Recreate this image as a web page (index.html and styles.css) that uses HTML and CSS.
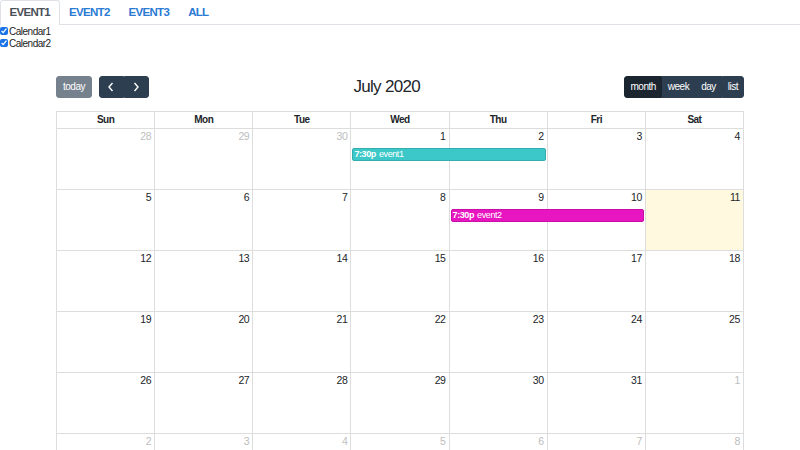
FILE: index.html
```html
<!DOCTYPE html>
<html>
<head>
<meta charset="utf-8">
<link rel="stylesheet" href="styles.css">
</head>
<body>
<div class="tabs">
  <div class="tab active">EVENT1</div>
  <div class="tab">EVENT2</div>
  <div class="tab">EVENT3</div>
  <div class="tab">ALL</div>
</div>
<div class="cals">
  <label class="cal"><input type="checkbox" checked>Calendar1</label>
  <label class="cal"><input type="checkbox" checked>Calendar2</label>
</div>
<div class="calendar">
  <div class="toolbar">
    <div class="tb-left">
      <button class="btn btn-today">today</button>
      <div class="btn-group">
        <button class="btn btn-nav"><svg width="8" height="10" viewBox="0 0 8 10"><polyline points="5.5,1 2,5 5.5,9" fill="none" stroke="#fff" stroke-width="1.4"/></svg></button>
        <button class="btn btn-nav"><svg width="8" height="10" viewBox="0 0 8 10"><polyline points="2.5,1 6,5 2.5,9" fill="none" stroke="#fff" stroke-width="1.4"/></svg></button>
      </div>
    </div>
    <h2 class="title">July 2020</h2>
    <div class="btn-group">
      <button class="btn active">month</button>
      <button class="btn">week</button>
      <button class="btn">day</button>
      <button class="btn">list</button>
    </div>
  </div>
  <div class="grid">
    <div class="head-row">
      <div class="hcell">Sun</div><div class="hcell">Mon</div><div class="hcell">Tue</div><div class="hcell">Wed</div><div class="hcell">Thu</div><div class="hcell">Fri</div><div class="hcell">Sat</div>
    </div>
    <div class="week">
      <div class="day other">28</div><div class="day other">29</div><div class="day other">30</div><div class="day">1</div><div class="day">2</div><div class="day">3</div><div class="day">4</div>
      <div class="event ev1"><b>7:30p</b><span>event1</span></div>
    </div>
    <div class="week">
      <div class="day">5</div><div class="day">6</div><div class="day">7</div><div class="day">8</div><div class="day">9</div><div class="day">10</div><div class="day today">11</div>
      <div class="event ev2"><b>7:30p</b><span>event2</span></div>
    </div>
    <div class="week">
      <div class="day">12</div><div class="day">13</div><div class="day">14</div><div class="day">15</div><div class="day">16</div><div class="day">17</div><div class="day">18</div>
    </div>
    <div class="week">
      <div class="day">19</div><div class="day">20</div><div class="day">21</div><div class="day">22</div><div class="day">23</div><div class="day">24</div><div class="day">25</div>
    </div>
    <div class="week">
      <div class="day">26</div><div class="day">27</div><div class="day">28</div><div class="day">29</div><div class="day">30</div><div class="day">31</div><div class="day other">1</div>
    </div>
    <div class="week">
      <div class="day other">2</div><div class="day other">3</div><div class="day other">4</div><div class="day other">5</div><div class="day other">6</div><div class="day other">7</div><div class="day other">8</div>
    </div>
  </div>
</div>
</body>
</html>
```
FILE: styles.css
```css
html, body {
  margin: 0;
  padding: 0;
}
body {
  font-family: "Liberation Sans", Arial, sans-serif;
  color: #212529;
  background: #fff;
  overflow: hidden;
}
.tabs {
  display: flex;
  height: 24px;
  border-bottom: 1px solid #dee2e6;
}
.tab {
  box-sizing: border-box;
  height: 25px;
  padding: 0 8.5px;
  border: 1px solid transparent;
  border-bottom: none;
  border-radius: 3px 3px 0 0;
  font-size: 11.5px;
  font-weight: 700;
  letter-spacing: -0.7px;
  line-height: 23px;
  color: #2a7ad4;
}
.tab.active {
  color: #495057;
  background: #fff;
  border-color: #dee2e6;
}
.cals {
  font-size: 10px;
  letter-spacing: -0.5px;
  color: #222;
}
.cal {
  display: flex;
  align-items: center;
  height: 12px;
}
.cal input {
  width: 8px;
  height: 8px;
  margin: 0 1px 0 0;
  accent-color: #1a73e8;
}
.calendar {
  margin: 27px 56px 0;
}
.toolbar {
  display: flex;
  justify-content: space-between;
  align-items: center;
  height: 22px;
  margin-bottom: 13px;
}
.tb-left {
  display: flex;
  align-items: center;
}
.btn {
  box-sizing: border-box;
  font-family: inherit;
  font-size: 10px;
  letter-spacing: -0.5px;
  color: #fff;
  background: #2c3e50;
  border: 1px solid #2c3e50;
  height: 22px;
  padding: 0 5px;
  margin: 0;
  border-radius: 3px;
  line-height: 20px;
}
.btn-today {
  opacity: .65;
  margin-right: 7px;
  padding: 0 6px;
}
.btn-group {
  display: flex;
}
.btn-group .btn {
  border-radius: 0;
}
.btn-group .btn:first-child {
  border-radius: 3px 0 0 3px;
}
.btn-group .btn:last-child {
  border-radius: 0 3px 3px 0;
}
.btn-nav {
  width: 25px;
  display: flex;
  align-items: center;
  justify-content: center;
  padding: 0;
}
.btn.active {
  background: #1a252f;
  border-color: #1a252f;
}
.title {
  margin: 0;
  font-size: 17px;
  letter-spacing: -0.7px;
  font-weight: 400;
  color: #212529;
}
.grid {
  border-left: 1px solid #ddd;
  border-top: 1px solid #ddd;
}
.head-row {
  display: grid;
  grid-template-columns: repeat(7, 1fr);
}
.hcell {
  height: 16px;
  line-height: 16px;
  border-right: 1px solid #ddd;
  border-bottom: 1px solid #ddd;
  text-align: center;
  font-weight: 700;
  font-size: 10px;
  letter-spacing: -0.5px;
}
.week {
  display: grid;
  grid-template-columns: repeat(7, 1fr);
  grid-template-rows: 19px 13px 1fr;
  height: 61px;
}
.day {
  grid-row: 1 / -1;
  border-right: 1px solid #ddd;
  border-bottom: 1px solid #ddd;
  text-align: right;
  padding: 1px 3px 0 0;
  font-size: 10.5px;
  letter-spacing: -0.4px;
  line-height: 13px;
}
.day:nth-child(1) { grid-column: 1; }
.day:nth-child(2) { grid-column: 2; }
.day:nth-child(3) { grid-column: 3; }
.day:nth-child(4) { grid-column: 4; }
.day:nth-child(5) { grid-column: 5; }
.day:nth-child(6) { grid-column: 6; }
.day:nth-child(7) { grid-column: 7; }
.day.other {
  color: #bdbdbd;
}
.day.today {
  background: rgba(255, 220, 40, .15);
}
.event {
  grid-row: 2;
  z-index: 1;
  box-sizing: border-box;
  height: 13px;
  margin: 0 2px 0 1px;
  border-radius: 2px;
  color: #fff;
  font-size: 9px;
  letter-spacing: -0.4px;
  line-height: 11px;
  padding: 0 1px;
  white-space: nowrap;
  overflow: hidden;
}
.event b {
  margin-right: 3px;
}
.ev1 {
  grid-column: 4 / 6;
  background: #3cc8c8;
  border: 1px solid #32aeb0;
}
.ev2 {
  grid-column: 5 / 7;
  background: #e816c0;
  border: 1px solid #c80ea6;
}
```
